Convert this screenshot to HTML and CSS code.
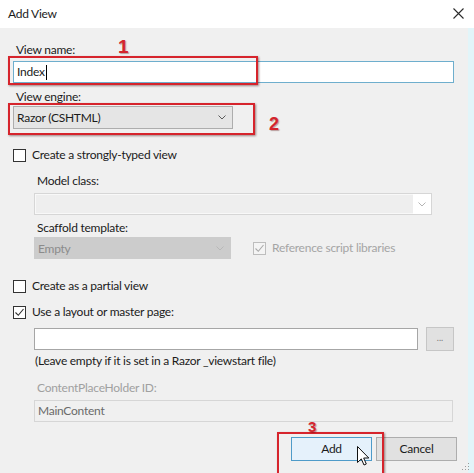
FILE: index.html
```html
<!DOCTYPE html>
<html lang='en'>

<head>
  <meta charset='UTF-8'>
  <meta name='viewport' content='width=device-width, initial-scale=1.0'>
  <title>Add View</title>
  <link rel="stylesheet" href="styles.css">
</head>

<body>
  <div class='window'>
    <div class='titlebar'>
      <span class='title'>Add View</span>
      <svg class='close' viewBox='0 0 11 11'>
        <path d='M0.5 0.5 L10.5 10.5 M10.5 0.5 L0.5 10.5' stroke='#2b2b2b' stroke-width='1.1' fill='none' />
      </svg>
    </div>

    <div class='content'>
      <div class='label view-name-label'>View name:</div>
      <div class='field name-field'><span>Index</span><span class='caret'></span></div>

      <div class='label engine-label'>View engine:</div>
      <div class='combo engine'>
        <span>Razor (CSHTML)</span>
        <svg class='chevron' viewBox='0 0 8 5'><path d='M0.5 0.5 L4 4 L7.5 0.5' stroke='#5a5a5a' fill='none' /></svg>
      </div>

      <div class='check-row strongly'><span class='box'></span>Create a strongly-typed view</div>

      <div class='indent'>
        <div class='label model-label'>Model class:</div>
        <div class='combo model'>
          <span class='combo-text'></span>
          <span class='drop'>
            <svg class='chevron' viewBox='0 0 8 5'><path d='M0.5 0.5 L4 4 L7.5 0.5' stroke='#b4b4b4' fill='none' /></svg>
          </span>
        </div>

        <div class='label scaffold-label'>Scaffold template:</div>
        <div class='scaffold-row'>
          <div class='combo template'>
            <span>Empty</span>
            <svg class='chevron' viewBox='0 0 8 5'><path d='M0.5 0.5 L4 4 L7.5 0.5' stroke='#b8b8b8' fill='none' /></svg>
          </div>
          <div class='check-row ref'>
            <span class='box muted-box'>
              <svg viewBox='0 0 11 11'><path d='M1.5 5.5 L4.3 8.3 L9.5 2' stroke='#a9a9a9' stroke-width='1.1' fill='none' /></svg>
            </span>
            Reference script libraries
          </div>
        </div>
      </div>

      <div class='check-row partial'><span class='box'></span>Create as a partial view</div>
      <div class='check-row layout'>
        <span class='box'>
          <svg viewBox='0 0 11 11'><path d='M1.5 5.5 L4.3 8.3 L9.5 2' stroke='#2e2e2e' stroke-width='1.1' fill='none' /></svg>
        </span>
        Use a layout or master page:
      </div>

      <div class='indent'>
        <div class='layout-row'>
          <div class='field layout-field'></div>
          <div class='browse'>...</div>
        </div>
        <div class='label note'>(Leave empty if it is set in a Razor _viewstart file)</div>
        <div class='label muted cph-label'>ContentPlaceHolder ID:</div>
        <div class='field cph-field'>MainContent</div>
      </div>

      <div class='actions'>
        <div class='btn primary'>Add</div>
        <div class='btn'>Cancel</div>
      </div>
    </div>

    <!-- annotations drawn over the dialog -->
    <div class='mark mark-name'></div>
    <div class='mark mark-engine'></div>
    <div class='mark mark-add'></div>
    <div class='num num-1'>1</div>
    <div class='num num-2'>2</div>
    <div class='num num-3'>3</div>

    <svg class='cursor' viewBox='0 0 13 20'>
      <path d='M0.5 0.5 L0.5 16.5 L4.3 12.9 L7 19 L9.3 18 L6.7 12 L11.8 12 Z' fill='#fff' stroke='#111' stroke-width='1' stroke-linejoin='round' />
    </svg>

    <svg class='grip' viewBox='0 0 8 8'>
      <rect x='6' y='0' width='1' height='1' fill='#9a9a9a' />
      <rect x='3' y='3' width='1' height='1' fill='#9a9a9a' />
      <rect x='6' y='3' width='1' height='1' fill='#9a9a9a' />
      <rect x='0' y='6' width='1' height='1' fill='#9a9a9a' />
      <rect x='3' y='6' width='1' height='1' fill='#9a9a9a' />
      <rect x='6' y='6' width='1' height='1' fill='#9a9a9a' />
    </svg>
  </div>
</body>

</html>
```

FILE: styles.css
```css
html,
body {
  margin: 0;
}

body {
  width: 474px;
  height: 473px;
  overflow: hidden;
  background-color: #e2f5f9;
  font-family: Lato, 'Liberation Sans', sans-serif;
  font-size: 12px;
  letter-spacing: -0.25px;
  color: #1b1b1b;
}

.window {
  position: relative;
  width: 474px;
  height: 473px;
}

.titlebar {
  height: 28px;
  box-sizing: border-box;
  background-color: #fff;
  padding: 6px 10px 0 8px;
  line-height: 16px;
  display: flex;
  justify-content: space-between;
  align-items: flex-start;
}

.close {
  width: 11px;
  height: 11px;
  margin-top: 2px;
}

.content {
  width: 468px;
  height: 445px;
  box-sizing: border-box;
  background-color: #f0f0f0;
  padding-left: 13px;
  overflow: hidden;
}

.label {
  height: 16px;
  line-height: 16px;
  padding-left: 3px;
  white-space: nowrap;
}

.muted {
  color: #a0a0a0;
}

.view-name-label {
  margin-top: 14px;
}

.engine-label {
  margin-top: 6px;
}

.field {
  height: 22px;
  box-sizing: border-box;
  border: 1px solid #adadad;
  background-color: #fff;
  line-height: 20px;
  padding-left: 3px;
  display: flex;
  align-items: center;
}

.name-field {
  width: 441px;
  margin-top: 3px;
  border-color: #6eaecd;
}

.caret {
  width: 1px;
  height: 15px;
  background-color: #000;
  margin-left: 1px;
}

.combo {
  height: 23px;
  box-sizing: border-box;
  border: 1px solid #adadad;
  background-color: #e5e5e5;
  padding-left: 3px;
  display: flex;
  justify-content: space-between;
  align-items: center;
}

.chevron {
  width: 8px;
  height: 5px;
  margin-right: 6px;
}

.engine {
  width: 220px;
  margin-top: 1px;
}

.check-row {
  height: 16px;
  line-height: 16px;
  display: flex;
  align-items: center;
  white-space: nowrap;
}

.box {
  width: 13px;
  height: 13px;
  box-sizing: border-box;
  border: 1px solid #333;
  background-color: #fff;
  margin-right: 6px;
  display: flex;
  justify-content: center;
  align-items: center;
}

.box svg {
  width: 11px;
  height: 11px;
}

.muted-box {
  border-color: #bdbdbd;
  background-color: #f4f4f4;
}

.strongly {
  margin-top: 18px;
}

.indent {
  padding-left: 21px;
}

.model-label {
  margin-top: 10px;
}

.model {
  width: 398px;
  height: 22px;
  margin-top: 4px;
  border-color: #d6d6d6;
  background-color: #eeeeee;
  padding-left: 0;
  box-shadow: inset 0 0 0 1px #f8f8f8;
}

.drop {
  width: 18px;
  height: 20px;
  background-color: #fff;
  display: flex;
  justify-content: center;
  align-items: center;
}

.drop .chevron {
  margin-right: 0;
}

.scaffold-label {
  margin-top: 5px;
}

.scaffold-row {
  height: 22px;
  margin-top: 1px;
  display: flex;
  align-items: center;
}

.template {
  width: 197px;
  height: 22px;
  border-color: #cccccc;
  background-color: #cccccc;
  color: #8b8b8b;
}

.ref {
  margin-left: 22px;
  color: #a5a5a5;
}

.partial {
  margin-top: 19px;
}

.layout {
  margin-top: 10px;
}

.layout-row {
  height: 24px;
  margin-top: 7px;
  display: flex;
  align-items: center;
}

.layout-field {
  width: 384px;
  border-color: #a6a6a6;
}

.browse {
  width: 28px;
  height: 24px;
  box-sizing: border-box;
  margin-left: 8px;
  border: 1px solid #c6c6c6;
  background-color: #e1e1e1;
  color: #7a7a7a;
  font-size: 9px;
  letter-spacing: 0;
  line-height: 20px;
  text-align: center;
}

.note {
  margin-top: 2px;
  padding-left: 1px;
}

.cph-label {
  margin-top: 11px;
}

.cph-field {
  width: 419px;
  margin-top: 4px;
  border-color: #d6d6d6;
  background-color: #f0f0f0;
  color: #6a6a6a;
}

.actions {
  margin-top: 15px;
  padding-right: 11px;
  display: flex;
  justify-content: flex-end;
  gap: 4px;
}

.btn {
  width: 81px;
  height: 24px;
  box-sizing: border-box;
  border: 1px solid #adadad;
  background-color: #e1e1e1;
  line-height: 22px;
  text-align: center;
}

.primary {
  border-color: #4e9bc9;
  background-color: #e5f1fb;
}

.mark {
  position: absolute;
  box-sizing: border-box;
  border: 2px solid #d6242c;
  box-shadow: 1px 1px 2px rgba(60, 0, 0, .45);
}

.mark-name {
  left: 8px;
  top: 56px;
  width: 250px;
  height: 29px;
}

.mark-engine {
  left: 8px;
  top: 103px;
  width: 247px;
  height: 32px;
}

.mark-add {
  left: 277px;
  top: 432px;
  width: 107px;
  height: 50px;
}

.num {
  position: absolute;
  font-family: 'Liberation Sans', sans-serif;
  font-weight: bold;
  letter-spacing: 0;
  color: #d4252d;
  text-shadow: 1px 1px 1px rgba(80, 0, 0, .35);
}

.num-1 {
  left: 118px;
  top: 37px;
  font-size: 19px;
  line-height: 19px;
}

.num-2 {
  left: 269px;
  top: 115px;
  font-size: 18px;
  line-height: 18px;
}

.num-3 {
  left: 308px;
  top: 419px;
  font-size: 15px;
  line-height: 15px;
}

.cursor {
  position: absolute;
  left: 357px;
  top: 446px;
  width: 13px;
  height: 20px;
}

.grip {
  position: absolute;
  left: 462px;
  top: 463px;
  width: 8px;
  height: 8px;
}
```
